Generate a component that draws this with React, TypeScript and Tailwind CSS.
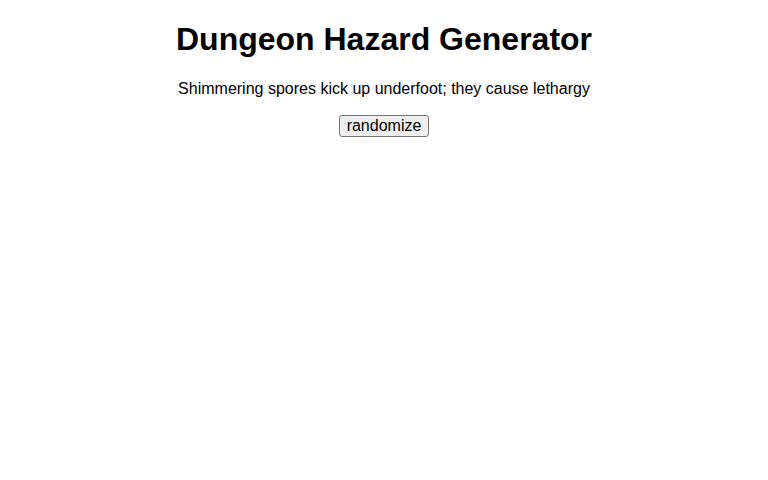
import { useState } from "react";

const hazards = [
  "Shimmering spores kick up underfoot; they cause lethargy",
  "A loose flagstone triggers a volley of rusted darts",
  "Freezing mist pools in the low corridor; it numbs the fingers",
  "Sticky webbing spans the archway; it smells of rot",
];

export default function App() {
  const [idx, setIdx] = useState(0);

  function randomize() {
    let next = idx;
    while (next === idx) next = Math.floor(Math.random() * hazards.length);
    setIdx(next);
  }

  return (
    <div className="text-center font-['Liberation_Sans',Arial,sans-serif] text-black">
      <h1 className="my-[21.44px] text-[32px] font-bold leading-[normal]">
        Dungeon Hazard Generator
      </h1>
      <p className="my-4 text-base leading-[normal]">{hazards[idx]}</p>
      <button
        onClick={randomize}
        className="rounded-[3px] border border-[#767676] bg-[#efefef] px-[7px] py-px text-base leading-[normal] hover:bg-[#e5e5e5]"
      >
        randomize
      </button>
    </div>
  );
}
